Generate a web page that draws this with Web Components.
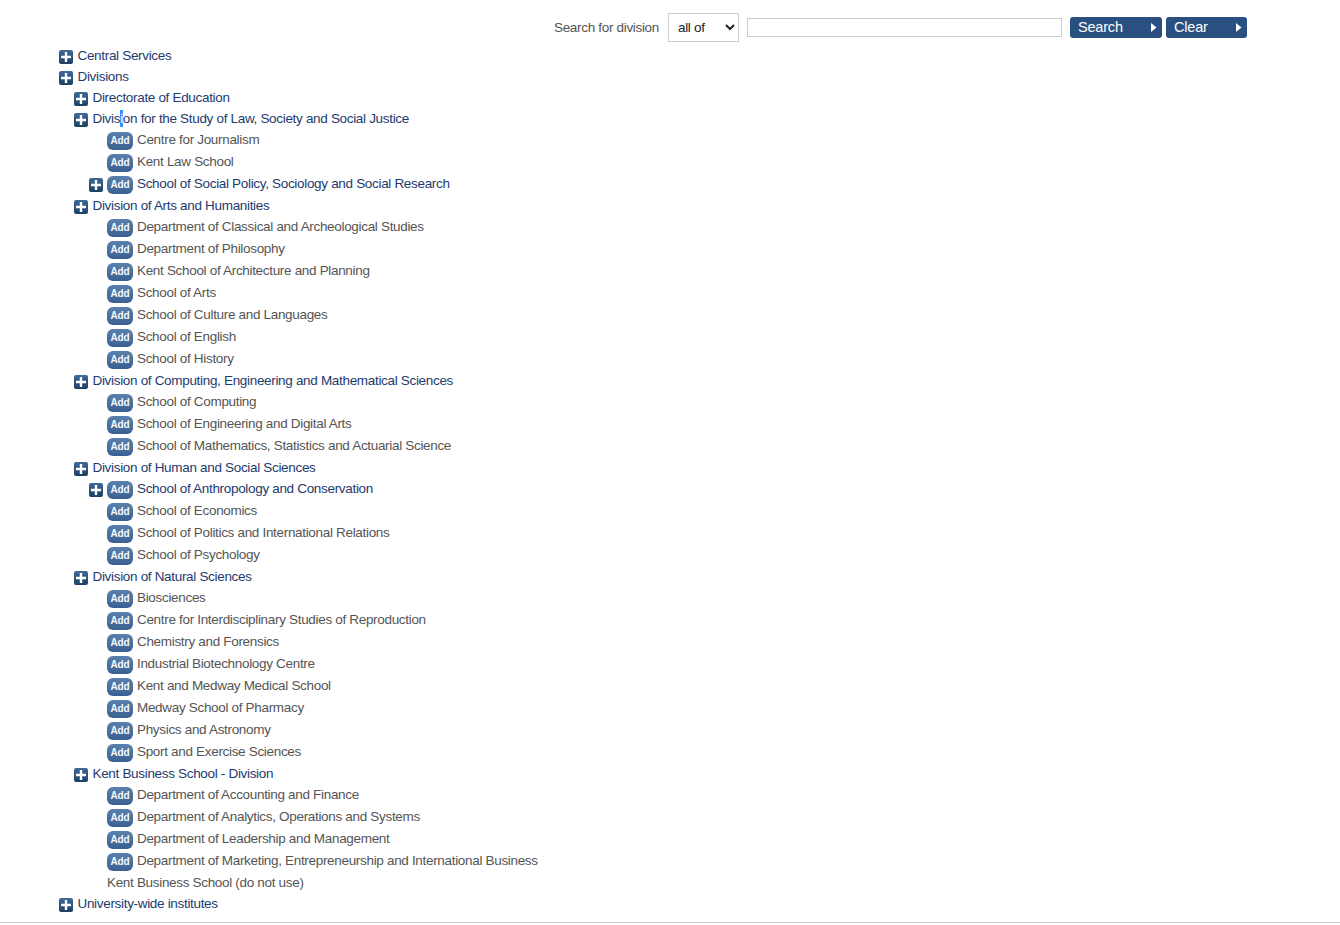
<!DOCTYPE html>
<html>
<head>
<meta charset="utf-8">
<title>Divisions</title>
<style>
    html, body { margin: 0; background: #fff; overflow: hidden; }
    body { font-family: "Liberation Sans", Arial, sans-serif; font-size: 13.5px; letter-spacing: -0.32px; height: 925px; }
    .picked { background: #3390ff; color: #fff; padding: 1px 0; }
</style>
</head>
<body>
<search-bar></search-bar>
<org-tree>
    <tree-row level="0" expand link>Central Services</tree-row>
    <tree-row level="0" expand link>Divisions</tree-row>
    <tree-row level="1" expand link>Directorate of Education</tree-row>
    <tree-row level="1" expand link>Divis<span class="picked">i</span>on for the Study of Law, Society and Social Justice</tree-row>
    <tree-row level="2" add>Centre for Journalism</tree-row>
    <tree-row level="2" add>Kent Law School</tree-row>
    <tree-row level="2" add expand link>School of Social Policy, Sociology and Social Research</tree-row>
    <tree-row level="1" expand link>Division of Arts and Humanities</tree-row>
    <tree-row level="2" add>Department of Classical and Archeological Studies</tree-row>
    <tree-row level="2" add>Department of Philosophy</tree-row>
    <tree-row level="2" add>Kent School of Architecture and Planning</tree-row>
    <tree-row level="2" add>School of Arts</tree-row>
    <tree-row level="2" add>School of Culture and Languages</tree-row>
    <tree-row level="2" add>School of English</tree-row>
    <tree-row level="2" add>School of History</tree-row>
    <tree-row level="1" expand link>Division of Computing, Engineering and Mathematical Sciences</tree-row>
    <tree-row level="2" add>School of Computing</tree-row>
    <tree-row level="2" add>School of Engineering and Digital Arts</tree-row>
    <tree-row level="2" add>School of Mathematics, Statistics and Actuarial Science</tree-row>
    <tree-row level="1" expand link>Division of Human and Social Sciences</tree-row>
    <tree-row level="2" add expand link>School of Anthropology and Conservation</tree-row>
    <tree-row level="2" add>School of Economics</tree-row>
    <tree-row level="2" add>School of Politics and International Relations</tree-row>
    <tree-row level="2" add>School of Psychology</tree-row>
    <tree-row level="1" expand link>Division of Natural Sciences</tree-row>
    <tree-row level="2" add>Biosciences</tree-row>
    <tree-row level="2" add>Centre for Interdisciplinary Studies of Reproduction</tree-row>
    <tree-row level="2" add>Chemistry and Forensics</tree-row>
    <tree-row level="2" add>Industrial Biotechnology Centre</tree-row>
    <tree-row level="2" add>Kent and Medway Medical School</tree-row>
    <tree-row level="2" add>Medway School of Pharmacy</tree-row>
    <tree-row level="2" add>Physics and Astronomy</tree-row>
    <tree-row level="2" add>Sport and Exercise Sciences</tree-row>
    <tree-row level="1" expand link>Kent Business School - Division</tree-row>
    <tree-row level="2" add>Department of Accounting and Finance</tree-row>
    <tree-row level="2" add>Department of Analytics, Operations and Systems</tree-row>
    <tree-row level="2" add>Department of Leadership and Management</tree-row>
    <tree-row level="2" add>Department of Marketing, Entrepreneurship and International Business</tree-row>
    <tree-row level="2">Kent Business School (do not use)</tree-row>
    <tree-row level="0" expand link>University-wide institutes</tree-row>
</org-tree>
<page-rule></page-rule>

<script>
class ArrowButton extends HTMLElement {
    connectedCallback() {
        this.attachShadow({ mode: 'open' });
        this.shadowRoot.innerHTML = `
            <style>
                :host {
                    display: flex;
                    align-items: center;
                    box-sizing: border-box;
                    height: 21px;
                    padding: 0 5px 0 8px;
                    background: #2a5082;
                    border-radius: 3px;
                    color: #fff;
                    font-size: 14.5px;
                    letter-spacing: -0.2px;
                }
                span { flex: 1; margin-bottom: 2px; }
                svg { display: block; }
            </style>
            <span><slot></slot></span>
            <svg width="6" height="9" viewBox="0 0 6 9"><path d="M0 0 L5.5 4.5 L0 9 Z" fill="#fff"/></svg>
        `;
    }
}
customElements.define('arrow-button', ArrowButton);

class SearchBar extends HTMLElement {
    connectedCallback() {
        this.attachShadow({ mode: 'open' });
        this.shadowRoot.innerHTML = `
            <style>
                :host {
                    display: flex;
                    align-items: center;
                    box-sizing: border-box;
                    height: 45px;
                    padding: 10px 0 0 554px;
                    color: #555;
                }
                label { width: 114px; white-space: nowrap; }
                select {
                    box-sizing: border-box;
                    width: 71px;
                    height: 29px;
                    padding: 0 0 0 5px;
                    border: 1px solid #ccc;
                    border-radius: 0;
                    background: #fff;
                    color: #222;
                    font: inherit;
                    letter-spacing: inherit;
                }
                input {
                    box-sizing: border-box;
                    width: 315px;
                    height: 19px;
                    margin: 0 8px;
                    border: 1px solid #ccc;
                    background: #fff;
                }
                arrow-button { width: 92px; }
                arrow-button + arrow-button { width: 81px; margin-left: 4px; }
            </style>
            <label>Search for division</label>
            <select><option>all of</option></select>
            <input type="text">
            <arrow-button>Search</arrow-button>
            <arrow-button>Clear</arrow-button>
        `;
    }
}
customElements.define('search-bar', SearchBar);

class OrgTree extends HTMLElement {
    connectedCallback() {
        this.attachShadow({ mode: 'open' });
        this.shadowRoot.innerHTML = `
            <style>
                :host { display: block; padding-left: 59px; }
            </style>
            <slot></slot>
        `;
    }
}
customElements.define('org-tree', OrgTree);

class TreeRow extends HTMLElement {
    connectedCallback() {
        this.attachShadow({ mode: 'open' });
        const level = Number(this.getAttribute('level'));
        const hasAdd = this.hasAttribute('add');
        const hasExpand = this.hasAttribute('expand');
        const plus = hasExpand ? `
            <svg class="plus" width="14" height="14" viewBox="0 0 14 14">
                <defs><linearGradient id="g" x1="0" y1="0" x2="0" y2="1"><stop offset="0" stop-color="#3f6b97"/><stop offset="1" stop-color="#1d3f63"/></linearGradient></defs>
                <rect width="14" height="14" rx="2" fill="url(#g)"/>
                <path d="M5.8 2h2.4v3.8H12v2.4H8.2V12H5.8V8.2H2V5.8h3.8z" fill="#fff"/>
            </svg>` : '';
        this.shadowRoot.innerHTML = `
            <style>
                :host {
                    display: flex;
                    align-items: center;
                    height: ${hasAdd ? 22 : 21}px;
                    padding-left: ${level === 2 ? 30 : level * 15}px;
                    color: ${this.hasAttribute('link') ? '#1e3a6e' : '#555'};
                    line-height: 16px;
                    white-space: nowrap;
                }
                .plus { display: block; flex: none; margin: 2px ${hasAdd ? 4 : 4.5}px 0 0; }
                .add {
                    flex: none;
                    width: 26px;
                    height: 18px;
                    margin: 2px 4px 0 0;
                    background: linear-gradient(#5a80ad, #3a6093);
                    border-radius: 6px;
                    color: #f7f9fb;
                    font-size: 10px;
                    font-weight: bold;
                    letter-spacing: -0.2px;
                    line-height: 17px;
                    text-align: center;
                }
                .lead { flex: none; width: 18px; }
                .label { align-self: flex-start; margin-top: 3px; }
            </style>
            ${level === 2 && !hasExpand ? '<span class="lead"></span>' : ''}
            ${plus}
            ${hasAdd ? '<span class="add">Add</span>' : ''}
            <span class="label"><slot></slot></span>
        `;
    }
}
customElements.define('tree-row', TreeRow);

class PageRule extends HTMLElement {
    connectedCallback() {
        this.attachShadow({ mode: 'open' });
        this.shadowRoot.innerHTML = `
            <style>
                :host { display: block; height: 1px; margin-top: 8px; background: #ccc; }
            </style>
        `;
    }
}
customElements.define('page-rule', PageRule);
</script>
</body>
</html>
